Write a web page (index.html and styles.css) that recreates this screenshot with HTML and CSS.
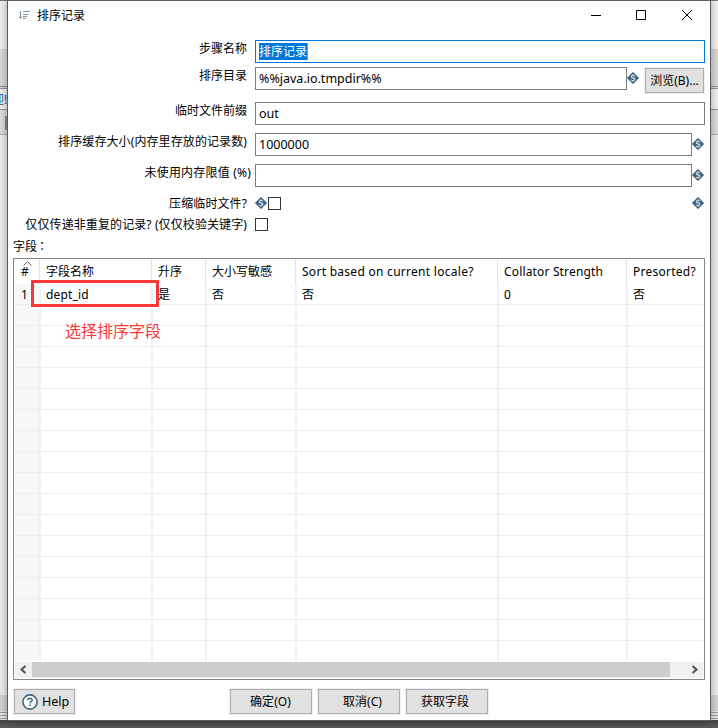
FILE: index.html
```html
<!DOCTYPE html>
<html lang="zh-CN">
<head>
<meta charset="utf-8">
<title>排序记录</title>
<link rel="stylesheet" href="styles.css">
</head>
<body>
<svg class="defs" aria-hidden="true">
  <symbol id="var" viewBox="0 0 12 12">
    <path d="M6 0.2 11.8 6 6 11.8 0.2 6Z" fill="#41647f" stroke="#41647f" stroke-width="0.6" stroke-linejoin="round"/>
    <path d="M7.8 4.2C7.4 3.4 4.3 3 4.3 4.7 4.3 6.1 7.8 5.7 7.8 7.3 7.8 9 4.6 8.7 4.1 7.7M6 2.2V3.3M6 8.7V9.8" fill="none" stroke="#dce8ee" stroke-width="1.1"/>
  </symbol>
</svg>
<div class="backdrop">
  <div class="bg-top"></div>
  <div class="bg-tools"></div>
  <div class="bg-tabs">迎!</div>
  <div class="bg-sub"><i></i></div>
  <div class="bg-body"></div>
  <div class="bg-foot"></div>
  <div class="bg-rules"></div>
  <div class="bg-dark"></div>
</div>
<main class="window">
  <header class="titlebar">
    <svg class="app-icon" width="12" height="11" viewBox="0 0 12 11" fill="none" stroke="#8194a6"><path d="M1.5 1V8M0 6.5 1.5 8.5 3 6.5M4 1.5H11M4 4.5H9.5M4 6.5H8M4 8.5H7"/></svg>
    <h1>排序记录</h1>
    <svg class="controls" width="104" height="12" viewBox="0 0 104 12" fill="none" stroke="#000"><path d="M0 6.5H10M45.5 1.5H54.5V10.5H45.5Z"/><path d="M91 1 101 11M101 1 91 11"/></svg>
  </header>
  <form class="form">
    <div class="row name"><label>步骤名称</label><div class="input focus"><span class="selected">排序记录</span></div></div>
    <div class="row dir"><label>排序目录</label><div class="input"><span class="tmp">%%java.io.tmpdir%%</span></div><svg class="var"><use href="#var"/></svg><button type="button" class="btn browse">浏览(B)...</button></div>
    <div class="row prefix"><label>临时文件前缀</label><div class="input"><span>out</span></div></div>
    <div class="row size"><label>排序缓存大小(内存里存放的记录数)</label><div class="input"><span>1000000</span></div><svg class="var"><use href="#var"/></svg></div>
    <div class="row mem"><label>未使用内存限值 (%)</label><div class="input"></div><svg class="var"><use href="#var"/></svg></div>
    <div class="row zip"><label>压缩临时文件?</label><svg class="var"><use href="#var"/></svg><span class="check"></span><svg class="var end"><use href="#var"/></svg></div>
    <div class="row unique"><label>仅仅传递非重复的记录? (仅仅校验关键字)</label><span class="check"></span></div>
  </form>
  <div class="caption">字段<span lang="zh-TW">：</span></div>
  <section class="table">
    <div class="tr head"><span class="num"><svg width="9" height="5" viewBox="0 0 9 5" fill="none" stroke="#666"><path d="M.5 4.5 4.5.8 8.5 4.5"/></svg>#</span><span>字段名称</span><span>升序</span><span>大小写敏感</span><span class="w-sort">Sort based on current locale?</span><span class="w-coll">Collator Strength</span><span class="w-pre">Presorted?</span></div>
    <div class="tr first"><span>1</span><span class="picked">dept_id<b class="mark"></b><em class="note">选择排序字段</em></span><span>是</span><span>否</span><span>否</span><span>0</span><span>否</span></div>
    <div class="tr"><span></span><span></span><span></span><span></span><span></span><span></span><span></span></div>
    <div class="tr"><span></span><span></span><span></span><span></span><span></span><span></span><span></span></div>
    <div class="tr"><span></span><span></span><span></span><span></span><span></span><span></span><span></span></div>
    <div class="tr"><span></span><span></span><span></span><span></span><span></span><span></span><span></span></div>
    <div class="tr"><span></span><span></span><span></span><span></span><span></span><span></span><span></span></div>
    <div class="tr"><span></span><span></span><span></span><span></span><span></span><span></span><span></span></div>
    <div class="tr"><span></span><span></span><span></span><span></span><span></span><span></span><span></span></div>
    <div class="tr"><span></span><span></span><span></span><span></span><span></span><span></span><span></span></div>
    <div class="tr"><span></span><span></span><span></span><span></span><span></span><span></span><span></span></div>
    <div class="tr"><span></span><span></span><span></span><span></span><span></span><span></span><span></span></div>
    <div class="tr"><span></span><span></span><span></span><span></span><span></span><span></span><span></span></div>
    <div class="tr"><span></span><span></span><span></span><span></span><span></span><span></span><span></span></div>
    <div class="tr"><span></span><span></span><span></span><span></span><span></span><span></span><span></span></div>
    <div class="tr"><span></span><span></span><span></span><span></span><span></span><span></span><span></span></div>
    <div class="tr"><span></span><span></span><span></span><span></span><span></span><span></span><span></span></div>
    <div class="tr"><span></span><span></span><span></span><span></span><span></span><span></span><span></span></div>
    <div class="tr last"><span></span><span></span><span></span><span></span><span></span><span></span><span></span></div>
    <div class="scroll">
      <svg width="17" height="15" viewBox="0 0 17 15"><path d="M10.5 4 6.5 7.5 10.5 11" fill="none" stroke="#505050" stroke-width="2"/></svg>
      <div class="thumb"></div>
      <svg class="right" width="33" height="15" viewBox="0 0 33 15"><path d="M22.5 4 26.5 7.5 22.5 11" fill="none" stroke="#505050" stroke-width="2"/></svg>
    </div>
  </section>
  <footer class="actions">
    <button type="button" class="btn help"><svg width="16" height="16" viewBox="0 0 16 16" fill="none" stroke="#41647f"><circle cx="8" cy="8" r="7.1" stroke-width="1.6" fill="#fff"/><path d="M5.8 6.3C5.8 3.7 10.2 3.7 10.2 6.2 10.2 7.6 8 7.7 8 9.4M8 10.6V12" stroke-width="1.5"/></svg><span>Help</span></button>
    <button type="button" class="btn ok">确定(O)</button>
    <button type="button" class="btn cancel">取消(C)</button>
    <button type="button" class="btn get">获取字段</button>
  </footer>
</main>
</body>
</html>
```
FILE: styles.css
```css
* { box-sizing: border-box; }
body {
  margin: 0;
  width: 718px;
  height: 728px;
  overflow: hidden;
  display: grid;
  font: 12px/16px "Noto Sans", "Noto Sans CJK SC", sans-serif;
  color: #000;
}
.defs { position: absolute; width: 0; height: 0; }
.backdrop, .window { grid-area: 1 / 1; }
.backdrop { display: flex; flex-direction: column; background: #ededed; }
.bg-top { height: 49px; border-top: 1px solid #777; background: #f0f0f0; }
.bg-tools { height: 40px; background: #d9d9d9; border-bottom: 3px double #909090; }
.bg-tabs { height: 21px; background: #f0f0f0; border-bottom: 1px solid #999; color: #235a8c; line-height: 21px; text-indent: -8px; }
.bg-sub { height: 25px; padding: 6px 5px; background: #dcdcdc; border-bottom: 1px solid #aaa; }
.bg-sub i { display: block; width: 3px; height: 14px; background: #888; }
.bg-body { height: 560px; }
.bg-foot { height: 16px; background: #d2d2d2; }
.bg-rules { height: 9px; background: repeating-linear-gradient(#e6e6e6 0 1px, #999 1px 2px, #e6e6e6 2px 3px); }
.bg-dark { flex: 1; background: linear-gradient(#444, #5b5b5b); }
.window {
  width: 704px;
  height: 721px;
  margin-left: 7px;
  border: 1px solid #5c5c5f;
  background: #fff;
  box-shadow: 0 0 8px rgba(0, 0, 0, .35);
}
.titlebar { display: flex; align-items: flex-start; height: 39px; padding-left: 11px; }
.app-icon { margin-top: 9px; }
h1 { margin: 7px 0 0 6px; font: inherit; }
.controls { margin: 8px 0 0 auto; margin-right: 15px; }
.row { display: flex; align-items: flex-start; }
.row label { width: 239px; margin: 1px 8px 0 0; display: flex; justify-content: flex-end; white-space: pre; }
.input { height: 23px; border: 1px solid #7a7a7a; padding: 2px 3px; flex: none; width: 437px; line-height: 17px; font-size: 12.5px; }
.name { height: 27px; }
.name .input, .prefix .input { width: 450px; }
.input.focus { border-color: #0078d7; }
.selected { display: inline-block; height: 17px; background: #0078d7; color: #fff; font-size: 12px; border-right: 1px solid #e08030; }
.dir { height: 35px; }
.dir .input { width: 372px; }
.prefix, .size { height: 31px; }
.size label { letter-spacing: .1px; }
.mem { height: 33px; }
.mem label { width: 243px; margin-right: 4px; letter-spacing: .2px; }
.zip { height: 21px; }
.var { width: 12px; height: 12px; margin-top: 5px; flex: none; }
.check { width: 13px; height: 13px; border: 1px solid #333; }
.zip .var { margin-top: 0; }
.zip .check { margin-left: 1px; }
.zip .end { margin-left: 411px; }
.zip label, .unique label { margin-top: -1px; letter-spacing: .1px; }
.unique { height: 20px; }
.btn {
  height: 25px;
  padding: 0;
  border: 1px solid #adadad;
  outline: 1px solid #f0f0f0;
  background: #e1e1e1;
  font: inherit;
  color: #000;
  white-space: nowrap;
}
.input.focus { padding-top: 2px; }
.browse { width: 59px; margin: 1px 0 0 6px; }
.caption { height: 20px; padding-left: 5px; }
.caption span { font-family: "Noto Sans CJK TC", sans-serif; margin-left: -1px; }
.table { width: 692px; height: 422px; margin-left: 5px; border: 1px solid #828790; padding: 1px; position: relative; }
.tr { display: grid; grid-template-columns: 26px 112px 54px 90px 202px 129px 75px; grid-template-rows: 100%; height: 21px; line-height: 19px; }
.tr span { border-right: 2px solid #edf1f8; border-bottom: 1px solid #ededed; padding-left: 5px; white-space: nowrap; }
.tr span:first-child { background: #f7f7f7; padding-left: 6px; }
.tr span:last-child { border-right: 0; }
.tr.first { line-height: 21px; }
.tr.last { height: 20px; }
.tr.last span { border-bottom: 0; }
.tr.head { height: 24px; line-height: 23px; }
.tr.head span { border-right: 0; border-bottom: 0; box-shadow: inset -1px 0 #fff, inset -2px 0 #e2e2e2; }
.tr.head span:last-child { box-shadow: none; }
.tr.head .num { background: #fff; }
.tr .w-sort { letter-spacing: .28px; }
.tr .w-coll { letter-spacing: .16px; }
.tr .w-pre { letter-spacing: .25px; }
.num { position: relative; }
.num svg { position: absolute; left: 8px; top: 1px; }
.picked { position: relative; letter-spacing: .15px; }
.mark { position: absolute; left: -10px; top: -4px; width: 128px; height: 27px; border: 3px solid #fb3838; }
.note { position: absolute; left: 24px; top: 36px; font: 16px/20px "Noto Sans CJK SC", sans-serif; letter-spacing: 0; color: #fb3838; }
.scroll { display: flex; height: 16px; margin-top: 1px; background: #f0f0f0; width: 688px; }
.thumb { width: 638px; height: 15px; background: #cdcdcd; }
.actions { display: flex; padding: 9px 0 0 6px; }
.help { width: 61px; display: flex; align-items: center; padding-left: 7px; gap: 4px; font-size: 12.5px; }
.ok { width: 82px; margin-left: 155px; padding-right: 1px; letter-spacing: .1px; }
.cancel { width: 82px; margin-left: 6px; padding-left: 7px; }
.get { width: 82px; margin-left: 6px; padding-right: 4px; }
```
